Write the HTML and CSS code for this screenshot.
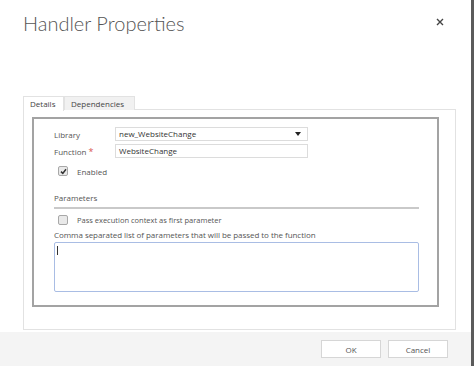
FILE: index.html
```html
<!DOCTYPE html>
<html>
<head>
    <meta charset="utf-8">
    <title>Handler Properties</title>
    <link rel="stylesheet" href="styles.css">
</head>
<body>
    <div class="dialog">
        <div class="header">
            <h1>Handler Properties</h1>
            <button class="close" title="Close">
                <svg width="8" height="8" viewBox="0 0 8 8"><path d="M1 1L7 7M7 1L1 7" stroke="#444" stroke-width="1.4"/></svg>
            </button>
        </div>

        <div class="content">
            <div class="tabs">
                <div class="tab active">Details</div>
                <div class="tab">Dependencies</div>
            </div>
            <div class="panel">
                <div class="group">
                    <div class="field-grid">
                        <label class="label">Library</label>
                        <div class="select">
                            <span>new_WebsiteChange</span>
                            <span class="arrow"></span>
                        </div>
                        <label class="label">Function <span class="req">*</span></label>
                        <div class="input">WebsiteChange</div>
                    </div>

                    <div class="check-row enabled">
                        <span class="checkbox checked">
                            <svg width="7" height="7" viewBox="0 0 7 7"><path d="M1 3.6L2.8 5.4L6 1.2" fill="none" stroke="#333" stroke-width="1.5"/></svg>
                        </span>
                        <span>Enabled</span>
                    </div>

                    <div class="section-title">Parameters</div>

                    <div class="check-row pass">
                        <span class="checkbox"></span>
                        <span>Pass execution context as first parameter</span>
                    </div>

                    <div class="hint">Comma separated list of parameters that will be passed to the function</div>
                    <div class="textarea"><span class="caret"></span></div>
                </div>
            </div>
        </div>

        <div class="footer">
            <button class="button">OK</button>
            <button class="button">Cancel</button>
        </div>
    </div>
</body>
</html>
```

FILE: styles.css
```css
body {
    margin: 0;
    background: #ffffff;
    font-family: 'Segoe UI', 'Open Sans', 'Noto Sans', sans-serif;
    color: #444;
}

.dialog {
    width: 471px;
    height: 366px;
    display: flex;
    flex-direction: column;
    border-right: 3px solid #5b5b5b;
}

.header {
    height: 52px;
    display: flex;
    align-items: flex-start;
    justify-content: space-between;
    padding: 0 27px 0 23px;
}

.header h1 {
    margin: 11px 0 0 0;
    font-family: 'Segoe UI Light', Lato, 'Open Sans', sans-serif;
    font-size: 20px;
    font-weight: 300;
    color: #555;
}

.close {
    margin-top: 18px;
    background: none;
    border: none;
    padding: 0;
    width: 8px;
    height: 8px;
    display: flex;
}

.content {
    margin-top: 44px;
    padding-left: 23px;
    height: 227px;
}

.tabs {
    display: flex;
    height: 14px;
}

.tab {
    font-size: 8px;
    line-height: 13px;
    padding: 0 6px;
    border: 1px solid #e2e2e2;
    border-bottom: none;
    color: #444;
}

.tab.active {
    background: #fff;
    width: 27px;
    position: relative;
    z-index: 1;
    height: 14px;
}

.tab:not(.active) {
    background: #f1f1f1;
    width: 57px;
    height: 13px;
}

.panel {
    width: 423px;
    height: 212px;
    border: 1px solid #e2e2e2;
    margin-top: -1px;
    padding-top: 7px;
    padding-left: 8px;
}

.group {
    width: 365px;
    height: 178px;
    border: 2px solid #a3a3a3;
    padding: 8px 18px 0 20px;
}

.field-grid {
    display: grid;
    grid-template-columns: 61px 193px;
    grid-auto-rows: 14px;
    row-gap: 3px;
    align-items: center;
}

.label {
    font-size: 8px;
    color: #555;
}

.req {
    color: #d9534f;
    font-size: 9px;
}

.select,
.input {
    height: 14px;
    box-sizing: border-box;
    border: 1px solid #dcdcdc;
    font-size: 8px;
    line-height: 12px;
    padding: 0 3px;
    color: #333;
    display: flex;
    justify-content: space-between;
    align-items: center;
}

.arrow {
    width: 0;
    height: 0;
    border-left: 3px solid transparent;
    border-right: 3px solid transparent;
    border-top: 4px solid #222;
    margin-right: 3px;
}

.check-row {
    display: flex;
    align-items: center;
    font-size: 8px;
    color: #555;
}

.check-row.enabled {
    margin-top: 7px;
    height: 12px;
    padding-left: 4px;
    gap: 9px;
}

.checkbox {
    width: 8px;
    height: 8px;
    border: 1px solid #a8a8a8;
    border-radius: 2px;
    background: #e9e9e9;
    display: flex;
    align-items: center;
    justify-content: center;
}

.section-title {
    margin-top: 15px;
    font-size: 8px;
    color: #555;
    padding-bottom: 4px;
    border-bottom: 2px solid #c9c9c9;
}

.check-row.pass {
    margin-top: 5px;
    height: 12px;
    padding-left: 4px;
    gap: 9px;
    font-size: 7.5px;
}

.hint {
    margin-top: 3px;
    font-size: 8px;
    line-height: 11px;
    color: #555;
    letter-spacing: -0.05px;
}

.textarea {
    margin-top: 2px;
    height: 42px;
    border: 1px solid #a9bde4;
    border-radius: 2px;
    padding: 3px 2px;
}

.caret {
    display: block;
    width: 1px;
    height: 9px;
    background: #333;
}

.footer {
    margin-top: auto;
    height: 34px;
    background: #f4f4f4;
    display: flex;
    justify-content: flex-end;
    align-items: center;
    gap: 7px;
    padding-right: 23px;
}

.button {
    width: 60px;
    height: 18px;
    background: #fff;
    border: 1px solid #d6d6d6;
    font-family: inherit;
    font-size: 8px;
    color: #555;
}
```
